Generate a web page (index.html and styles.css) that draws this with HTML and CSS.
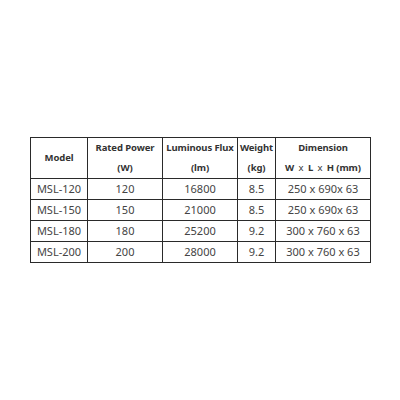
FILE: index.html
```html
<!DOCTYPE html>
<html>
<head>
<meta charset="utf-8">
<link rel="stylesheet" href="styles.css">
</head>
<body>
<div class="page">
<table class="spec">
  <colgroup>
    <col class="c1"><col class="c2"><col class="c3"><col class="c4"><col class="c5">
  </colgroup>
  <thead>
    <tr>
      <th>Model</th>
      <th>Rated Power<br>(W)</th>
      <th>Luminous Flux<br>(lm)</th>
      <th>Weight<br>(kg)</th>
      <th>Dimension<br>W <span class="x">x</span> L <span class="x">x</span> H (mm)</th>
    </tr>
  </thead>
  <tbody>
    <tr><td>MSL-120</td><td>120</td><td>16800</td><td>8.5</td><td>250 x 690x 63</td></tr>
    <tr><td>MSL-150</td><td>150</td><td>21000</td><td>8.5</td><td>250 x 690x 63</td></tr>
    <tr><td>MSL-180</td><td>180</td><td>25200</td><td>9.2</td><td>300 x 760 x 63</td></tr>
    <tr><td>MSL-200</td><td>200</td><td>28000</td><td>9.2</td><td>300 x 760 x 63</td></tr>
  </tbody>
</table>
</div>
</body>
</html>
```
FILE: styles.css
```css
html, body { margin: 0; padding: 0; background: #fff; }
.page { padding: 137px 0 0 30px; }
.spec {
  border-collapse: collapse;
  font-family: "Noto Sans", "Open Sans", sans-serif;
  color: #333;
  table-layout: fixed;
  width: 340px;
}
.c1 { width: 57px; }
.c2 { width: 75px; }
.c3 { width: 75px; }
.c4 { width: 38px; }
.c5 { width: 95px; }
.spec th, .spec td {
  border: 1.3px solid #2a2a2a;
  text-align: center;
  padding: 0;
  white-space: nowrap;
}
.spec th {
  font-size: 9.5px;
  font-weight: bold;
  line-height: 20px;
  height: 40px;
  letter-spacing: -0.1px;
}
.spec th .x { font-weight: normal; padding: 0 2px; }
.spec td {
  font-size: 11px;
  line-height: 20px;
  height: 20px;
  color: #444;
}
```
